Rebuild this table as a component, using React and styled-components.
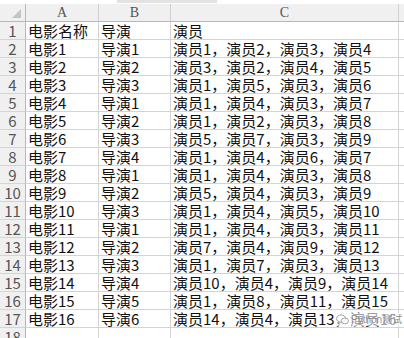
import React from 'react'
import styled, { createGlobalStyle } from 'styled-components'

const GlobalStyle = createGlobalStyle`
body {
  margin: 0;
  background: #fff;
  overflow: hidden;
  font-family: "Noto Sans CJK SC", sans-serif;
}
`

const Page = styled.div`
width: 404px;
height: 338px;
overflow: hidden;
position: relative;
background: #fff;
`

const TopStrip = styled.div`
height: 4px;
display: flex;
`
const Tab = styled.div`
margin-left: 117px;
width: 100px;
height: 3px;
background: #e3e3e3;
`

const Sheet = styled.div`
display: grid;
grid-template-columns: 26px 73px 72px 228px 20px;
grid-auto-rows: 18px;
`

const HeadCell = styled.div`
box-sizing: border-box;
background: #f0f0f0;
border-right: 1px solid #d0d0d0;
border-bottom: 1px solid #b8b8b8;
color: #555;
font-family: "Liberation Serif", serif;
font-size: 14px;
line-height: 17px;
text-align: center;
height: 18px;
`

const Corner = styled(HeadCell)`
position: relative;
border-right-color: #b8b8b8;
&::after {
  content: '';
  position: absolute;
  right: 4px;
  bottom: 3px;
  width: 0;
  height: 0;
  border-left: 9px solid transparent;
  border-bottom: 9px solid #c4c4c4;
}
`

const RowNum = styled.div`
box-sizing: border-box;
background: #f0f0f0;
border-right: 1px solid #b8b8b8;
border-bottom: 1px solid #d4d4d4;
color: #555;
font-size: 15px;
line-height: 18px;
text-align: center;
font-family: "Noto Sans CJK SC", sans-serif;
`

const Cell = styled.div`
box-sizing: border-box;
border-right: 1px solid #d4d4d4;
border-bottom: 1px solid #d4d4d4;
color: #111;
font-size: 15px;
line-height: 18px;
padding-left: 2px;
white-space: nowrap;
overflow: hidden;
`

const Watermark = styled.div`
position: absolute;
left: 334px;
top: 313px;
display: flex;
align-items: center;
gap: 2px;
padding: 0 2px;
white-space: nowrap;
background: rgba(255, 255, 255, 0.6);
color: rgba(130, 130, 130, 0.9);
font-family: "Liberation Sans", "Noto Sans CJK SC", sans-serif;
font-size: 10px;
line-height: 13px;
`

const rows = [
  ['电影名称', '导演', '演员'],
  ['电影1', '导演1', '演员1，演员2，演员3，演员4'],
  ['电影2', '导演2', '演员3，演员2，演员4，演员5'],
  ['电影3', '导演3', '演员1，演员5，演员3，演员6'],
  ['电影4', '导演1', '演员1，演员4，演员3，演员7'],
  ['电影5', '导演2', '演员1，演员2，演员3，演员8'],
  ['电影6', '导演3', '演员5，演员7，演员3，演员9'],
  ['电影7', '导演4', '演员1，演员4，演员6，演员7'],
  ['电影8', '导演1', '演员1，演员4，演员3，演员8'],
  ['电影9', '导演2', '演员5，演员4，演员3，演员9'],
  ['电影10', '导演3', '演员1，演员4，演员5，演员10'],
  ['电影11', '导演1', '演员1，演员4，演员3，演员11'],
  ['电影12', '导演2', '演员7，演员4，演员9，演员12'],
  ['电影13', '导演3', '演员1，演员7，演员3，演员13'],
  ['电影14', '导演4', '演员10，演员4，演员9，演员14'],
  ['电影15', '导演5', '演员1，演员8，演员11，演员15'],
  ['电影16', '导演6', '演员14，演员4，演员13，演员16'],
  ['', '', ''],
]

const WeChat = () => (
  <svg width="13" height="11" viewBox="0 0 14 12">
    <ellipse cx="5.5" cy="5" rx="5" ry="4" fill="none" stroke="#999" strokeWidth="1" />
    <ellipse cx="9.5" cy="7.5" rx="4" ry="3.2" fill="rgba(255,255,255,0.7)" stroke="#999" strokeWidth="1" />
  </svg>
)

const App = () => {
  return (
    <Page>
      <GlobalStyle />
      <TopStrip>
        <Tab />
      </TopStrip>
      <Sheet>
        <Corner />
        <HeadCell>A</HeadCell>
        <HeadCell>B</HeadCell>
        <HeadCell>C</HeadCell>
        <HeadCell />
        {rows.map((r, i) => (
          <React.Fragment key={i}>
            <RowNum>{i + 1}</RowNum>
            <Cell>{r[0]}</Cell>
            <Cell>{r[1]}</Cell>
            <Cell>{r[2]}</Cell>
            <Cell />
          </React.Fragment>
        ))}
      </Sheet>
      <Watermark>
        <WeChat />
        Python测试
      </Watermark>
    </Page>
  )
}

export default App
